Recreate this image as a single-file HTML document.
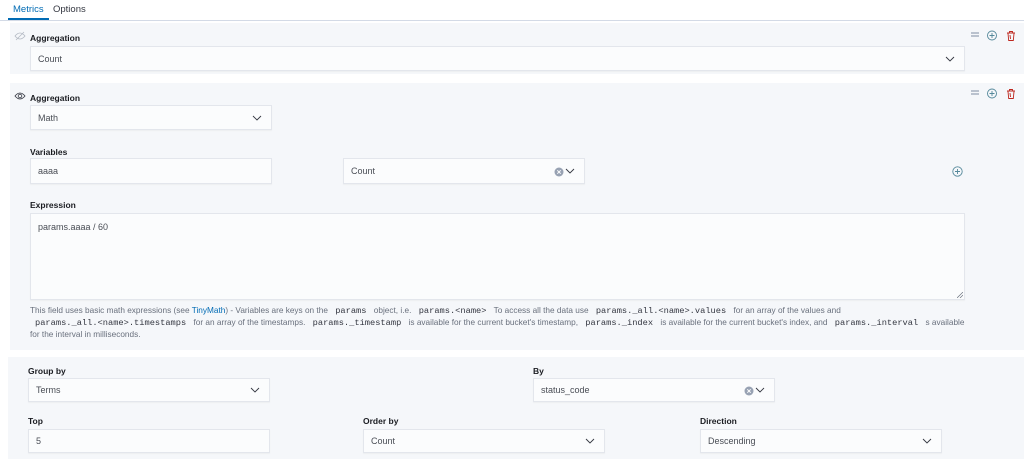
<!DOCTYPE html>
<html><head><meta charset="utf-8"><style>
*{box-sizing:border-box;margin:0;padding:0}
body{width:1024px;height:459px;background:#fff;font-family:"Liberation Sans",sans-serif;color:#343741;position:relative;overflow:hidden;font-size:9px}
.a{position:absolute}
.panel{position:absolute;background:#f5f7fa}
.lbl{position:absolute;font-weight:bold;font-size:8.5px;color:#1a1c21}
.inp{position:absolute;background:#fbfcfd;border:1px solid #e3e6ec;box-shadow:0 1px 1px rgba(0,0,0,.04);font-size:9px;color:#494d55;padding-left:7px;display:flex;align-items:center}
.chev{position:absolute;right:9px;top:50%;margin-top:-3px}
.help{position:absolute;left:30px;font-size:8.25px;color:#69707d;white-space:nowrap}
code{font-family:"Liberation Mono",monospace;font-size:8.7px;color:#343741;padding:0 5px}
</style></head><body>
<div class="a" style="left:0;top:20px;width:1024px;height:1px;background:#d3dae6"></div>
<div class="a" style="left:13px;top:4px;font-size:9.5px;color:#006bb4">Metrics</div>
<div class="a" style="left:53px;top:4px;font-size:9.5px;color:#343741">Options</div>
<div class="a" style="left:8px;top:18px;width:41px;height:2px;background:#006bb4"></div>

<div class="panel" style="left:10px;top:23px;width:1014px;height:51px"></div>
<svg class="a" style="left:14px;top:31px" width="12" height="10" viewBox="0 0 12 10"><path d="M1 5Q6 -1 11 5Q6 11 1 5Z M2 9L10 1" fill="none" stroke="#b4bac4" stroke-width=".8"/></svg>
<div class="lbl" style="left:30px;top:33px">Aggregation</div>
<div class="inp" style="left:30px;top:46px;width:935px;height:25px">Count<svg class="chev" width="10" height="6"><path d="M1 1L5 5L9 1" fill="none" stroke="#343741" stroke-width=".9"/></svg></div>

<div class="panel" style="left:10px;top:83px;width:1014px;height:267px"></div>
<svg class="a" style="left:14px;top:91px" width="12" height="10" viewBox="0 0 12 10"><path d="M1 5Q6 -1 11 5Q6 11 1 5Z" fill="none" stroke="#343741" stroke-width=".8"/><circle cx="6" cy="5" r="1.8" fill="none" stroke="#343741" stroke-width=".8"/></svg>
<div class="lbl" style="left:30px;top:93px">Aggregation</div>
<div class="inp" style="left:30px;top:105px;width:242px;height:25px">Math<svg class="chev" width="10" height="6"><path d="M1 1L5 5L9 1" fill="none" stroke="#343741" stroke-width=".9"/></svg></div>
<div class="lbl" style="left:30px;top:147px">Variables</div>
<div class="inp" style="left:30px;top:158px;width:242px;height:26px">aaaa</div>
<div class="inp" style="left:343px;top:158px;width:242px;height:26px">Count<svg class="a" style="right:20px;top:8px" width="10" height="10"><circle cx="5" cy="5" r="4.5" fill="#98a2b3"/><path d="M3.3 3.3L6.7 6.7M6.7 3.3L3.3 6.7" stroke="#fff" stroke-width="1"/></svg><svg class="chev" width="10" height="6"><path d="M1 1L5 5L9 1" fill="none" stroke="#343741" stroke-width=".9"/></svg></div>
<svg class="a" style="left:952px;top:166px" width="11" height="11"><circle cx="5.5" cy="5.5" r="4.7" fill="none" stroke="#54889a" stroke-width=".9"/><path d="M5.5 3V8M3 5.5H8" stroke="#54889a" stroke-width=".9"/></svg>
<div class="lbl" style="left:30px;top:200px">Expression</div>
<div class="inp" style="left:30px;top:213px;width:935px;height:87px;align-items:flex-start;padding-top:8px">params.aaaa / 60</div>
<svg class="a" style="left:957px;top:292px" width="6" height="6"><path d="M0 6L6 0M3 6L6 3" stroke="#69707d" stroke-width=".7"/></svg>
<div class="help" style="top:306px">This field uses basic math expressions (see <span style="color:#006bb4">TinyMath</span>) - Variables are keys on the <code>params</code> object, i.e. <code>params.&lt;name&gt;</code> To access all the data use <code>params._all.&lt;name&gt;.values</code> for an array of the values and</div>
<div class="help" style="top:318px"><code>params._all.&lt;name&gt;.timestamps</code> for an array of the timestamps. <code>params._timestamp</code> is available for the current bucket's timestamp, <code>params._index</code> is available for the current bucket's index, and <code>params._interval</code> s available</div>
<div class="help" style="top:330px">for the interval in milliseconds.</div>

<div class="panel" style="left:8px;top:357px;width:1016px;height:102px"></div>
<div class="lbl" style="left:28px;top:366px">Group by</div>
<div class="inp" style="left:28px;top:378px;width:242px;height:24px">Terms<svg class="chev" width="10" height="6"><path d="M1 1L5 5L9 1" fill="none" stroke="#343741" stroke-width=".9"/></svg></div>
<div class="lbl" style="left:533px;top:366px">By</div>
<div class="inp" style="left:533px;top:378px;width:242px;height:24px">status_code<svg class="a" style="right:20px;top:7px" width="10" height="10"><circle cx="5" cy="5" r="4.5" fill="#98a2b3"/><path d="M3.3 3.3L6.7 6.7M6.7 3.3L3.3 6.7" stroke="#fff" stroke-width="1"/></svg><svg class="chev" width="10" height="6"><path d="M1 1L5 5L9 1" fill="none" stroke="#343741" stroke-width=".9"/></svg></div>
<div class="lbl" style="left:28px;top:416px">Top</div>
<div class="inp" style="left:28px;top:429px;width:242px;height:24px">5</div>
<div class="lbl" style="left:363px;top:416px">Order by</div>
<div class="inp" style="left:363px;top:429px;width:242px;height:24px">Count<svg class="chev" width="10" height="6"><path d="M1 1L5 5L9 1" fill="none" stroke="#343741" stroke-width=".9"/></svg></div>
<div class="lbl" style="left:700px;top:416px">Direction</div>
<div class="inp" style="left:700px;top:429px;width:242px;height:24px">Descending<svg class="chev" width="10" height="6"><path d="M1 1L5 5L9 1" fill="none" stroke="#343741" stroke-width=".9"/></svg></div>

<svg class="a" style="left:970px;top:30px" width="50" height="12"><path d="M1 3H9M1 6H9" stroke="#98a2b3" stroke-width="1.3"/><circle cx="22" cy="5.5" r="4.5" fill="none" stroke="#54889a" stroke-width=".9"/><path d="M22 3V8M19.5 5.5H24.5" stroke="#54889a" stroke-width=".9"/><path d="M37 3H45M39.5 3V1.5H42.5V3M38 3.5L38.7 10.5H43.3L44 3.5M40 5L40.5 9" fill="none" stroke="#bd271e" stroke-width=".9"/></svg>
<svg class="a" style="left:970px;top:88px" width="50" height="12"><path d="M1 3H9M1 6H9" stroke="#98a2b3" stroke-width="1.3"/><circle cx="22" cy="5.5" r="4.5" fill="none" stroke="#54889a" stroke-width=".9"/><path d="M22 3V8M19.5 5.5H24.5" stroke="#54889a" stroke-width=".9"/><path d="M37 3H45M39.5 3V1.5H42.5V3M38 3.5L38.7 10.5H43.3L44 3.5M40 5L40.5 9" fill="none" stroke="#bd271e" stroke-width=".9"/></svg>
</body></html>
